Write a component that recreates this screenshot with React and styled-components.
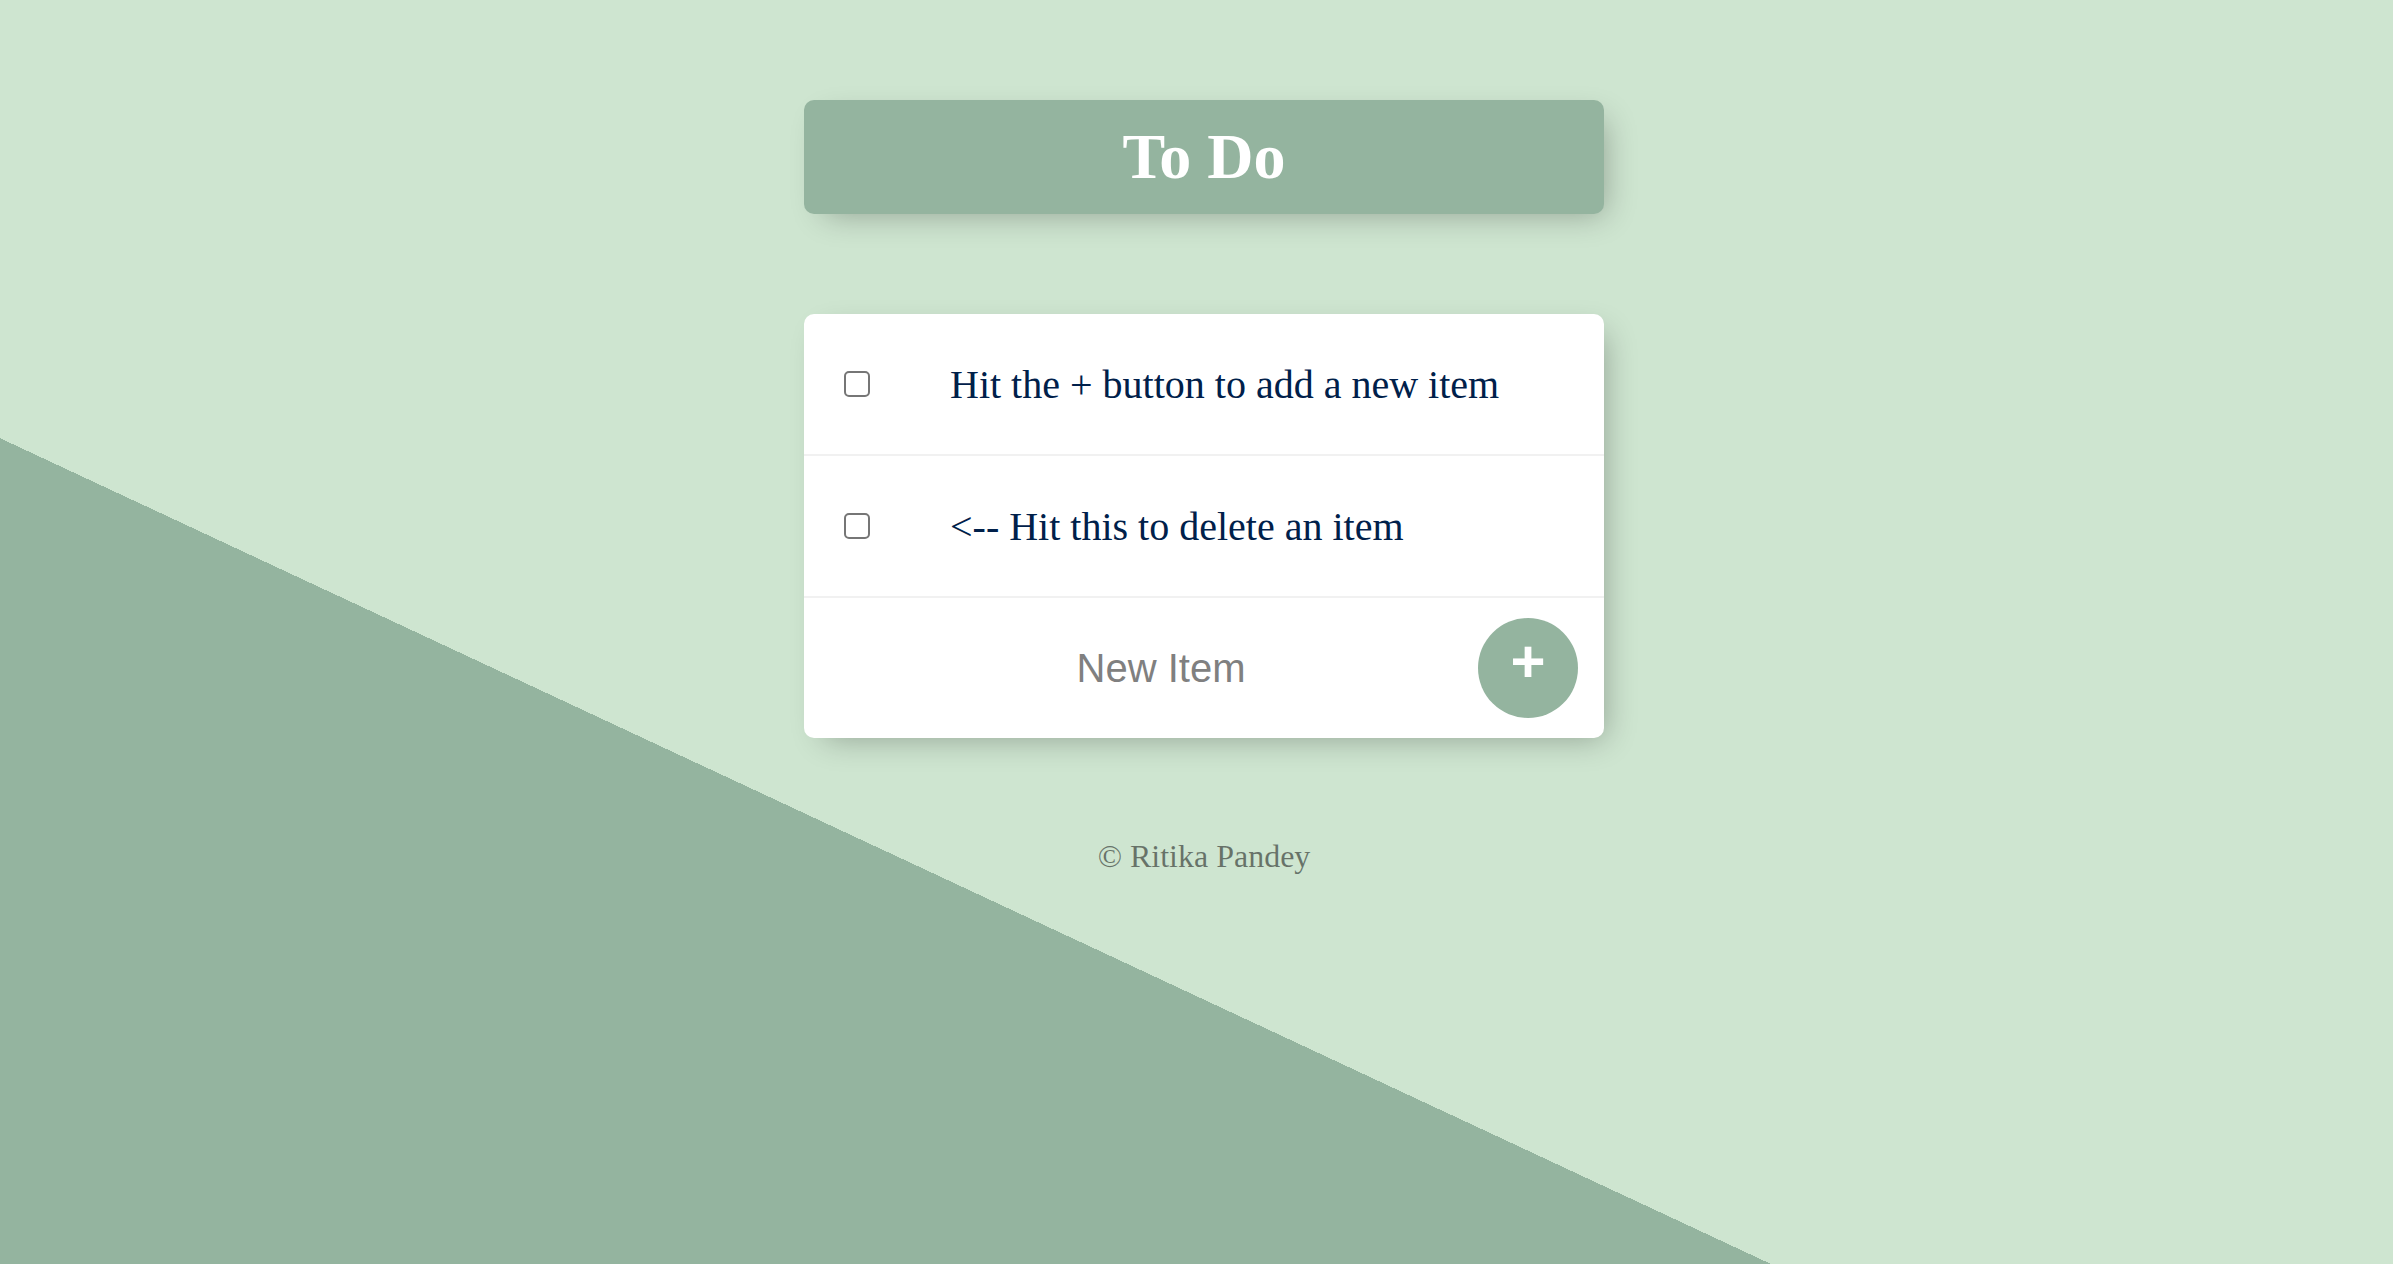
import styled, { createGlobalStyle } from "styled-components";

const GlobalStyle = createGlobalStyle`
html, body {
  margin: 0;
  padding: 0;
}
body {
  font-family: "Liberation Serif", "Times New Roman", serif;
}
`;

const Page = styled.div`
min-height: 100vh;
box-sizing: border-box;
padding: 100px 0 1px 15px;
background: linear-gradient(25deg, #94b49f 34.7%, #cee5d0 34.7%);
overflow: hidden;
`;

const Box = styled.div`
width: 800px;
margin: 0 auto 100px;
background: ${(p) => (p.$heading ? "#94b49f" : "#fff")};
text-align: ${(p) => (p.$heading ? "center" : "left")};
border-radius: 10px;
box-shadow: 10px 10px 30px -10px rgba(0, 0, 0, 0.3);
`;

const Title = styled.h1`
margin: 0;
padding: 20px;
color: #fff;
font-size: 64px;
font-weight: 700;
`;

const Item = styled.div`
min-height: 140px;
display: flex;
align-items: center;
border-bottom: 2px solid #f1f1f1;

&:last-child {
  border-bottom: 0;
}
`;

const Check = styled.input`
appearance: none;
flex-shrink: 0;
width: 26px;
height: 26px;
margin: 40px;
box-sizing: border-box;
border: 2.5px solid #767676;
border-radius: 5px;
background: #fff;
cursor: pointer;
`;

const Text = styled.p`
margin: 0;
padding: 40px;
font-size: 40px;
font-weight: 200;
color: #00204a;
`;

const Form = styled.form`
min-height: 140px;
display: flex;
align-items: center;
padding-left: 40px;
`;

const NewInput = styled.input`
width: 626px;
height: 120px;
padding: 0 4px;
box-sizing: content-box;
border: none;
background: transparent;
text-align: center;
font-family: "Liberation Sans", Arial, sans-serif;
font-size: 40px;
font-weight: 200;

&::placeholder {
  color: grey;
  opacity: 1;
}

&:focus {
  outline: none;
  box-shadow: inset 0 -6px 0 0 #94b49f;
}
`;

const AddButton = styled.button`
width: 100px;
height: 100px;
flex-shrink: 0;
border: 0;
border-radius: 50%;
padding: 0 0 12px;
background: #94b49f;
color: #fff;
font-family: "Liberation Sans", Arial, sans-serif;
font-size: 60px;
font-weight: 700;
line-height: 1;
cursor: pointer;
`;

const Footer = styled.footer`
text-align: center;
color: rgba(0, 0, 0, 0.5);
font-size: 32px;
`;

const items = ["Hit the + button to add a new item", "<-- Hit this to delete an item"];

const App = () => {
  return (
    <Page>
      <GlobalStyle />
      <Box $heading>
        <Title>To Do</Title>
      </Box>
      <Box>
        {items.map((text) => (
          <Item key={text}>
            <Check type="checkbox" />
            <Text>{text}</Text>
          </Item>
        ))}
        <Form onSubmit={(e) => e.preventDefault()}>
          <NewInput type="text" placeholder="New Item" autoComplete="off" />
          <AddButton type="submit">+</AddButton>
        </Form>
      </Box>
      <Footer>© Ritika Pandey</Footer>
    </Page>
  );
};

export default App;
